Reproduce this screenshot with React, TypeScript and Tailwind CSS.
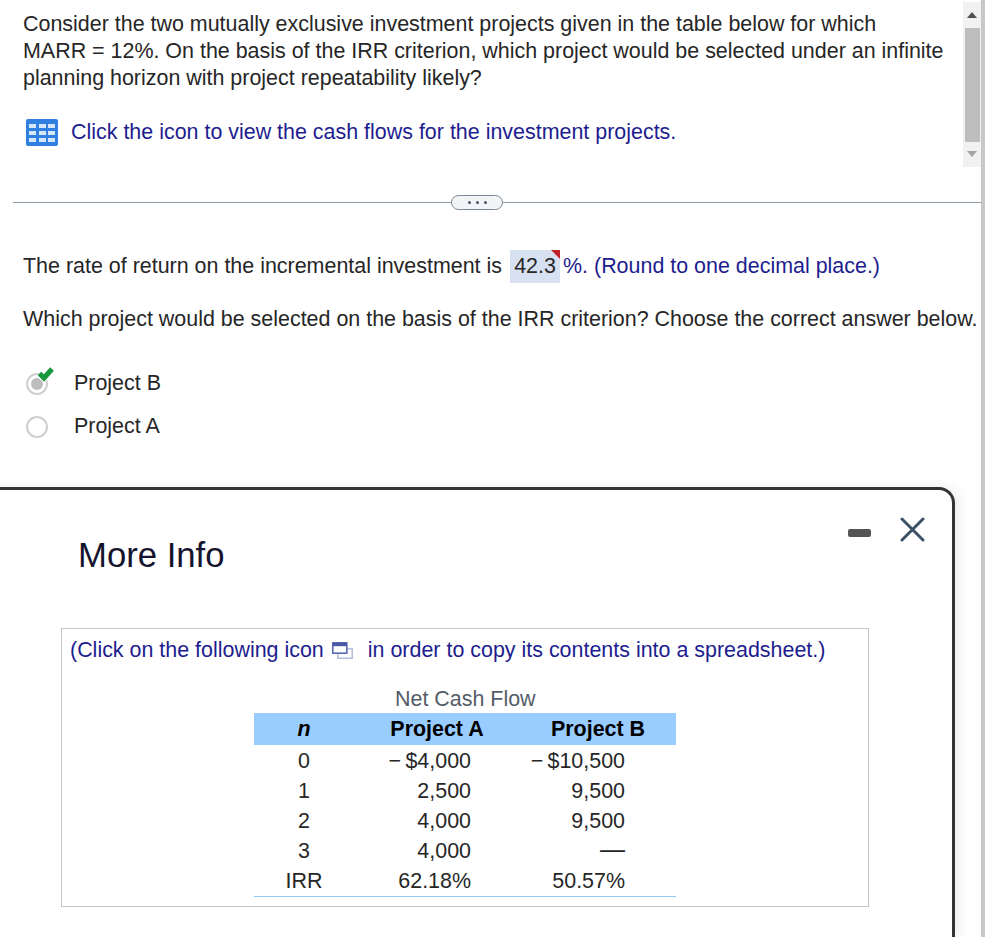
const rows = [
  ["0", "−\u2009$4,000", "−\u2009$10,500"],
  ["1", "2,500", "9,500"],
  ["2", "4,000", "9,500"],
  ["3", "4,000", "—"],
  ["IRR", "62.18%", "50.57%"],
];

function GridIcon() {
  return (
    <svg width="32" height="27" viewBox="0 0 32 27" className="shrink-0">
      <rect width="32" height="27" rx="2" fill="#2f80e0" />
      {[5, 12, 19].map((y) =>
        [3, 13, 22].map((x) => <rect key={`${x}-${y}`} x={x} y={y} width="7" height="4" fill="#d6e7fb" />)
      )}
    </svg>
  );
}

function CopyIcon() {
  return (
    <svg width="21" height="17" viewBox="0 0 21 17" className="shrink-0">
      <rect x="5.8" y="6.8" width="14.4" height="9.4" fill="#fff" stroke="#b9c0dd" strokeWidth="1.6" />
      <rect x="0.8" y="0.8" width="14" height="10.4" fill="#fff" stroke="#5a6ab0" strokeWidth="1.6" />
      <rect x="0.8" y="0.8" width="14" height="3.4" fill="#4a5aa8" />
    </svg>
  );
}

function CloseIcon() {
  return (
    <svg width="25" height="25" viewBox="0 0 25 25" fill="none" stroke="#3d5166" strokeWidth="3" strokeLinecap="round">
      <path d="M2 2 L23 23 M23 2 L2 23" />
    </svg>
  );
}

function Scrollbar() {
  return (
    <div className="absolute right-0 top-[2px] flex h-[165px] w-[18px] flex-col items-center bg-[#f1f1f1]">
      <div className="mt-[10px] h-0 w-0 border-x-[5px] border-b-[6px] border-x-transparent border-b-[#505050]" />
      <div className="ml-[1px] mt-[10px] h-[114px] w-[15px] bg-[#bdbdbd]" />
      <div className="mt-[9px] h-0 w-0 border-x-[5px] border-t-[6px] border-x-transparent border-t-[#a3a3a3]" />
    </div>
  );
}

export default function App() {
  return (
    <div className="relative flex h-[937px] w-[985px] flex-col overflow-hidden border-r-[4px] border-[#c8c8c8] bg-white font-['Liberation_Sans',Arial,sans-serif] text-[21.44px] text-[#262626]">
      <Scrollbar />

      <div className="pl-[23px] pt-[11px] leading-[27px]">
        <p className="w-[923px]">
          Consider the two mutually exclusive investment projects given in the table below for which
          <br />
          MARR = 12%. On the basis of the IRR criterion, which project would be selected under an infinite planning horizon with project repeatability likely?
        </p>
      </div>

      <div className="ml-[26px] mt-[27px] flex h-[27px] items-center gap-[13px] text-[#1d1d8f]">
        <GridIcon />
        <span>Click the icon to view the cash flows for the investment projects.</span>
      </div>

      <div className="relative ml-[13px] mt-[49px] h-[16px] w-[968px]">
        <div className="absolute inset-x-0 top-[7px] h-px bg-[#8b96a5]" />
        <div className="absolute left-[438px] top-0 flex h-[15px] w-[52px] items-center justify-center gap-[5px] rounded-full border border-[#7d8894] bg-[#f2f4f7]">
          <span className="h-[3px] w-[3px] rounded-full bg-[#4b5563]" />
          <span className="h-[3px] w-[3px] rounded-full bg-[#4b5563]" />
          <span className="h-[3px] w-[3px] rounded-full bg-[#4b5563]" />
        </div>
      </div>

      <div className="ml-[23px] mt-[39px] flex h-[33px] items-center">
        <span>The rate of return on the incremental investment is</span>
        <span className="relative ml-[8px] flex h-[33px] w-[50px] items-center justify-center bg-[#d7e1f1]">
          42.3
          <span className="absolute right-0 top-0 h-0 w-0 border-l-[9px] border-t-[9px] border-l-transparent border-t-[#c0202a]" />
        </span>
        <span className="ml-[3px] text-[#1d1d8f]">%. (Round to one decimal place.)</span>
      </div>

      <p className="ml-[23px] mt-[23px] whitespace-nowrap leading-[27px]">
        Which project would be selected on the basis of the IRR criterion? Choose the correct answer below.
      </p>

      <div className="ml-[26px] mt-[37px] flex h-[27px] items-center gap-[26px]">
        <span className="relative h-[22px] w-[22px] shrink-0 rounded-full border-2 border-[#cfcfcf]">
          <span className="absolute left-[3px] top-[3px] h-[12px] w-[12px] rounded-full bg-[#bdbdbd]" />
          <svg width="18" height="16" viewBox="0 0 18 16" className="absolute -right-[9px] -top-[9px]">
            <path d="M2.5 7.5 L7 12 L15 3" fill="none" stroke="#fff" strokeWidth="7" />
            <path d="M2.5 7.5 L7 12 L15 3" fill="none" stroke="#17963c" strokeWidth="5" />
          </svg>
        </span>
        <span>Project B</span>
      </div>
      <div className="ml-[26px] mt-[16px] flex h-[27px] items-center gap-[26px]">
        <span className="h-[22px] w-[22px] shrink-0 rounded-full border-2 border-[#cfcfcf]" />
        <span>Project A</span>
      </div>

      <div className="relative ml-[-8px] mt-[47px] w-[963px] flex-1 rounded-tr-[16px] border-r-[3px] border-t-[3px] border-[#333] bg-white shadow-[4px_0_12px_rgba(0,0,0,0.08)]">
        <div className="absolute right-[27px] top-[27px] flex items-start gap-[29px]">
          <div className="mt-[12px] h-[8px] w-[23px] rounded-[2px] bg-[#555]" />
          <CloseIcon />
        </div>

        <h2 className="ml-[86px] mt-[45px] text-[34.7px] leading-[40px] text-[#14142e]">More Info</h2>

        <div className="ml-[69px] mt-[53px] h-[279px] w-[808px] border border-[#c6c6c6]">
          <div className="ml-[8px] mt-[8px] flex h-[27px] items-center whitespace-nowrap text-[#1d1d8f]">
            <span>(Click on the following icon</span>
            <span className="ml-[8px]"><CopyIcon /></span>
            <span className="ml-[15px]">in order to copy its contents into a spreadsheet.)</span>
          </div>

          <div className="ml-[192px] mt-[21px] w-[422px]">
            <div className="pl-[141px] leading-[28px] text-[#555c68]">Net Cash Flow</div>
            <div className="border-b border-[#90caf9]">
              <table className="w-[422px] leading-[30px]">
                <thead>
                  <tr className="h-[32px] bg-[#99ccff] text-black">
                    <th className="w-[100px] text-center font-bold italic">n</th>
                    <th className="w-[166px] text-center font-bold">Project A</th>
                    <th className="text-center font-bold">Project B</th>
                  </tr>
                </thead>
                <tbody>
                  {rows.map(([n, a, b]) => (
                    <tr key={n} className={n === "0" ? "h-[31px]" : "h-[30px]"}>
                      <td className="text-center">{n}</td>
                      <td className="pr-[49px] text-right">{a}</td>
                      <td className="pr-[51px] text-right">
                        {b === "—" ? <span className="text-[25px] leading-none">{b}</span> : b}
                      </td>
                    </tr>
                  ))}
                </tbody>
              </table>
            </div>
          </div>
        </div>
      </div>
    </div>
  );
}
